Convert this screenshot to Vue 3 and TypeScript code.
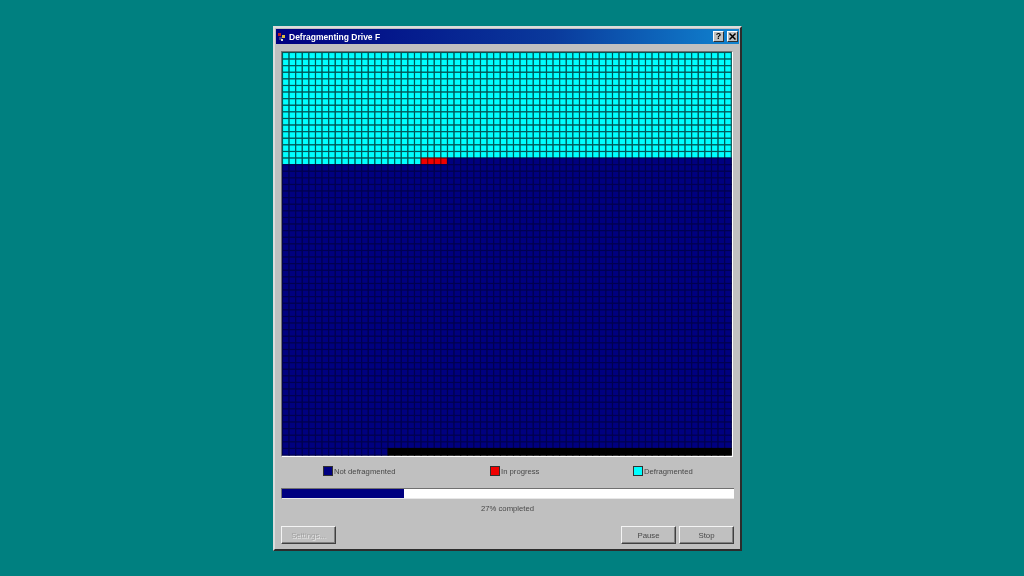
<script setup lang="ts">
const COLS = 68
const ROWS = 61
const PITCH = 6.6
type Cell = { x: number; y: number; fill: string; stroke: string }

function colour(c: number, r: number): [string, string] {
  if (r === ROWS - 1 && c >= 16) return ['#000000', '#000000']
  if (r < 16) return ['#00ffff', '#005656']
  if (r === 16) {
    if (c < 21) return ['#00ffff', '#005656']
    if (c < 25) return ['#f00000', '#800000']
  }
  return ['#000080', '#000050']
}

const cells: Cell[] = []
for (let r = 0; r < ROWS; r++) {
  for (let c = 0; c < COLS; c++) {
    const [fill, stroke] = colour(c, r)
    cells.push({ x: c * PITCH + 0.5, y: r * PITCH + 0.5, fill, stroke })
  }
}
const legend = [
  { label: 'Not defragmented', cls: 'navy' },
  { label: 'In progress', cls: 'red' },
  { label: 'Defragmented', cls: 'cyan' },
]
const progress = 27
</script>

<template>
  <div class="desktop">
    <div class="window">
      <div class="titlebar">
        <svg class="appicon" width="10" height="10" viewBox="0 0 10 10">
          <rect x="1" y="1" width="3" height="3" fill="#c02020" />
          <rect x="5" y="3" width="3" height="3" fill="#d8c040" />
          <rect x="2" y="5" width="3" height="3" fill="#404080" />
          <rect x="4" y="7" width="2" height="2" fill="#e0e0e0" />
        </svg>
        <span class="title">Defragmenting Drive F</span>
        <div class="caption-btns">
          <span class="cap">?</span>
          <span class="cap">
            <svg width="7" height="7" viewBox="0 0 7 7"><path d="M0.5 0.5 L6.5 6.5 M6.5 0.5 L0.5 6.5" stroke="#000" stroke-width="1.5" /></svg>
          </span>
        </div>
      </div>
      <div class="body">
        <div class="map">
          <svg class="mapsvg" width="450" height="404" viewBox="0 0 450 404">
            <rect
              v-for="(cell, i) in cells"
              :key="i"
              :x="cell.x"
              :y="cell.y"
              width="6.6"
              height="6.6"
              :fill="cell.fill"
              :stroke="cell.stroke"
              stroke-width="1.15"
            />
          </svg>
        </div>
        <div class="legend">
          <div v-for="l in legend" :key="l.label" class="legend-item">
            <span class="swatch" :class="l.cls"></span>
            <span>{{ l.label }}</span>
          </div>
        </div>
        <div class="progress">
          <div class="bar" :style="{ width: progress + '%' }"></div>
        </div>
        <div class="pct">{{ progress }}% completed</div>
        <div class="buttons">
          <button class="btn disabled">Settings...</button>
          <div class="right">
            <button class="btn">Pause</button>
            <button class="btn">Stop</button>
          </div>
        </div>
      </div>
    </div>
  </div>
</template>

<style>
html, body { margin: 0; background: #008080; }
</style>

<style scoped>
.desktop {
  width: 1024px;
  height: 576px;
  background: #008080;
  display: flex;
  justify-content: center;
  padding-top: 26px;
  padding-right: 9px;
  box-sizing: border-box;
  font-family: "Liberation Sans", Arial, sans-serif;
  overflow: hidden;
}
.window {
  width: 469px;
  height: 525px;
  box-sizing: border-box;
  background: #c0c0c0;
  border: 2px solid;
  border-color: #dcdcdc #2c2c2c #2c2c2c #dcdcdc;
  padding: 1px;
  display: flex;
  flex-direction: column;
  filter: blur(0.35px);
}
.titlebar {
  height: 15px;
  background: linear-gradient(90deg, #000080 0%, #0a3a9c 60%, #1084d0 100%);
  display: flex;
  align-items: center;
  padding: 0 1px 0 1px;
  flex: none;
}
.appicon { margin-right: 2px; flex: none; }
.title {
  color: #fff;
  font-size: 8.5px;
  font-weight: 700;
  flex: 1;
}
.caption-btns { display: flex; gap: 3px; }
.cap {
  width: 11px;
  height: 11px;
  box-sizing: border-box;
  background: #c0c0c0;
  border: 1px solid;
  border-color: #fff #303030 #303030 #fff;
  display: flex;
  align-items: center;
  justify-content: center;
  font-size: 9px;
  font-weight: 700;
  color: #000;
  line-height: 1;
}
.body {
  flex: 1;
  display: flex;
  flex-direction: column;
  padding: 7px 5px 0 5px;
}
.map {
  width: 452px;
  height: 406px;
  box-sizing: border-box;
  border: 1px solid;
  border-color: #707070 #fff #fff #707070;
  background: #c0c0c0;
  overflow: hidden;
  flex: none;
}
.mapsvg { display: block; }
.legend {
  display: grid;
  grid-template-columns: 167px 143px 1fr;
  padding-left: 42px;
  height: 12px;
  margin-top: 8px;
  font-size: 7.7px;
  color: #484848;
}
.legend-item { display: flex; align-items: center; gap: 1px; }
.swatch {
  width: 8px;
  height: 8px;
  box-sizing: content-box;
  border: 1px solid #303030;
  flex: none;
}
.navy { background: #000080; }
.red { background: #f00000; }
.cyan { background: #00ffff; }
.progress {
  margin-top: 11px;
  height: 11px;
  box-sizing: border-box;
  background: #fff;
  border-top: 1px solid #707070;
  border-left: 1px solid #707070;
  border-bottom: 1px solid #e8e8e8;
  flex: none;
}
.bar { height: 100%; background: #000080; }
.pct {
  margin-top: 4px;
  text-align: center;
  font-size: 7.7px;
  line-height: 12px;
  color: #484848;
}
.buttons {
  margin-top: 11px;
  display: flex;
  justify-content: space-between;
}
.right { display: flex; gap: 3px; }
.btn {
  width: 55px;
  height: 18px;
  padding: 0;
  box-sizing: border-box;
  background: #c0c0c0;
  border: 1px solid;
  border-color: #f4f4f4 #404040 #404040 #f4f4f4;
  box-shadow: inset -1px -1px 0 #808080;
  font-family: inherit;
  font-size: 7.8px;
  color: #484848;
}
.disabled { color: #a0a0a0; text-shadow: 1px 1px 0 #e8e8e8; }
</style>
